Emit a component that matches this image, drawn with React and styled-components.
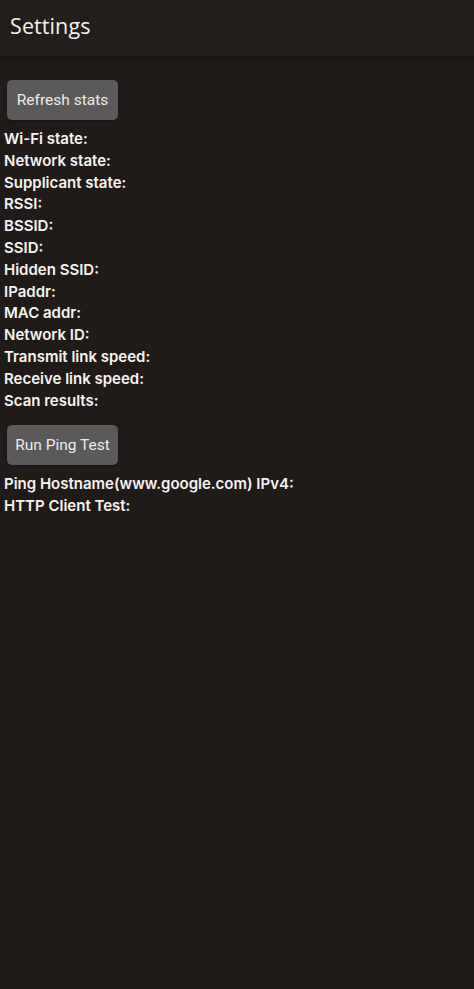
import React from "react";
import styled, { createGlobalStyle } from "styled-components";

const Global = createGlobalStyle`
  html, body { margin: 0; padding: 0; background: #201b19; }
  body { font-family: Inter, "Open Sans", sans-serif; }
`;

const Page = styled.div`
  width: 474px;
  min-height: 989px;
  background: #201b19;
  color: #f2efee;
  display: flex;
  flex-direction: column;
`;

const Header = styled.header`
  height: 57px;
  background: #221e1c;
  border-bottom: 1px solid #1d1816;
  box-shadow: 0 1px 2px rgba(0,0,0,0.25);
  display: flex;
  align-items: center;
  padding-left: 10px;
  box-sizing: border-box;
`;

const Title = styled.h1`
  margin: 0 0 6px;
  font-family: "Open Sans", sans-serif;
  font-weight: 500;
  font-size: 21.5px;
  color: #f4f1f0;
  letter-spacing: 0.1px;
`;

const Content = styled.main`
  display: flex;
  flex-direction: column;
  padding: 23px 0 0 4px;
`;

const Button = styled.button`
  align-self: flex-start;
  margin: ${(p) => p.$mt || 0}px 0 8px 3px;
  width: 111px;
  height: 40px;
  background: #5b5959;
  color: #eeebea;
  border: none;
  border-radius: 5px;
  font-family: Roboto, sans-serif;
  font-size: 15.5px;
  padding: 0;
  box-shadow: 0 1px 2px rgba(0,0,0,0.3);
`;

const Row = styled.div`
  font-family: Inter, sans-serif;
  font-weight: 600;
  font-size: 15px;
  line-height: 21.8px;
  color: #f6f3f2;
`;

const stats = [
  "Wi-Fi state:",
  "Network state:",
  "Supplicant state:",
  "RSSI:",
  "BSSID:",
  "SSID:",
  "Hidden SSID:",
  "IPaddr:",
  "MAC addr:",
  "Network ID:",
  "Transmit link speed:",
  "Receive link speed:",
  "Scan results:",
];

export default function App() {
  return (
    <Page>
      <Global />
      <Header>
        <Title>Settings</Title>
      </Header>
      <Content>
        <Button>Refresh stats</Button>
        {stats.map((s) => (
          <Row key={s}>{s}</Row>
        ))}
        <Button $mt={14}>Run Ping Test</Button>
        <Row>Ping Hostname(www.google.com) IPv4:</Row>
        <Row>HTTP Client Test:</Row>
      </Content>
    </Page>
  );
}
